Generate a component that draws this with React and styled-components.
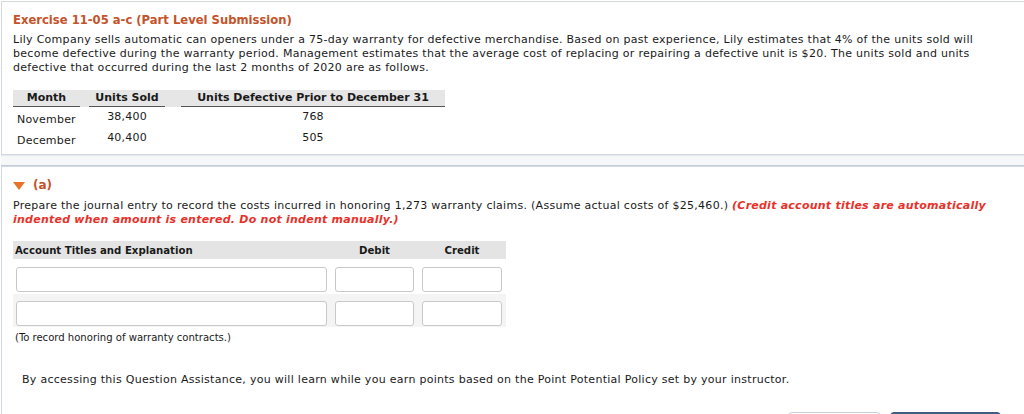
import React from 'react'
import styled, { createGlobalStyle } from 'styled-components'

const GlobalStyle = createGlobalStyle`
  html, body {
    margin: 0;
    padding: 0;
    background: #ffffff;
  }
  body {
    font-family: "DejaVu Sans", Verdana, sans-serif;
    color: #1a1a1a;
    overflow: hidden;
  }
`

const Page = styled.div`
  width: 1024px;
  height: 414px;
  overflow: hidden;
  padding-top: 1px;
  box-sizing: border-box;
`

const Panel = styled.section`
  border: 1px solid #d3d9e1;
  border-right: none;
  border-bottom: ${(p) => (p.$open ? 'none' : '1px solid #d3d9e1')};
  margin-left: 1px;
  padding: ${(p) => p.$pad};
  background: #ffffff;
`

const Gap = styled.div`
  height: 9px;
  background: #f6f7f9;
  border-top: 1px solid #e5e8ec;
  border-bottom: 1px solid #c5cddb;
  margin-left: 1px;
`

const Title = styled.h1`
  margin: 0 0 5px;
  font-size: 11.6px;
  font-weight: bold;
  color: #c4532b;
  line-height: 16px;
`

const Text = styled.p`
  margin: 0;
  font-size: 11px;
  line-height: 14px;
  letter-spacing: 0.28px;
`

const Red = styled.span`
  color: #e8312a;
  font-weight: bold;
  font-style: italic;
  letter-spacing: 0.24px;
`

const DataTable = styled.div`
  margin-top: 15px;
  width: 432px;
  font-size: 11px;
`

const HeadRow = styled.div`
  display: flex;
  background: #e6e6e6;
  height: 17px;
`

const Row = styled.div`
  display: flex;
  height: 21px;
`

const HeadCell = styled.div`
  width: ${(p) => p.$w}px;
  margin-left: ${(p) => p.$ml || 0}px;
  font-weight: bold;
  text-align: center;
  line-height: 16px;
  border-bottom: 1px solid #555555;
  box-sizing: border-box;
`

const Cell = styled.div`
  width: ${(p) => p.$w}px;
  margin-left: ${(p) => p.$ml || 0}px;
  line-height: ${(p) => (p.$num ? '20px' : '26px')};
  text-align: ${(p) => (p.$num ? 'center' : 'left')};
  padding-left: ${(p) => (p.$num ? '0' : '4px')};
  box-sizing: border-box;
  letter-spacing: 0.2px;
`

const Part = styled.div`
  display: flex;
  align-items: center;
  gap: 8px;
  font-size: 12px;
  font-weight: bold;
  color: #c4532b;
  height: 16px;
  margin-bottom: 6px;
`

const Caret = styled.svg`
  width: 12px;
  height: 8px;
  margin-top: 1px;
`

const Journal = styled.div`
  margin-top: 14px;
  width: 493px;
  font-family: "DejaVu Sans Condensed", Tahoma, sans-serif;
  font-size: 11.3px;
`

const JournalHead = styled.div`
  display: grid;
  grid-template-columns: 318px 87px 88px;
  background: #e4e4e4;
  height: 18px;
  line-height: 19px;
  font-weight: bold;
`

const JHCell = styled.div`
  text-align: ${(p) => p.$align || 'left'};
  padding-left: ${(p) => (p.$align ? '0' : '2px')};
`

const JournalRow = styled.div`
  display: grid;
  grid-template-columns: 318px 87px 88px;
  background: ${(p) => (p.$alt ? '#f4f4f4' : '#ffffff')};
  padding: ${(p) => (p.$alt ? '7px 0 1px' : '8px 0 2px')};
`

const Field = styled.div`
  height: 25px;
  margin: 0 4px 0 ${(p) => (p.$wide ? '3px' : '4px')};
  border: 1px solid #c9c9c9;
  border-radius: 3px;
  background: #ffffff;
  box-sizing: border-box;
`

const Note = styled.p`
  margin: 4px 0 0 2px;
  font-family: "DejaVu Sans Condensed", Tahoma, sans-serif;
  font-size: 11.2px;
  line-height: 14px;
`

const Assist = styled.p`
  margin: 28px 0 0 9px;
  font-size: 11px;
  line-height: 14px;
  letter-spacing: 0.28px;
`

const Buttons = styled.div`
  display: flex;
  justify-content: flex-end;
  gap: 9px;
  margin-top: 25px;
  padding-right: 12px;
`

const Btn = styled.button`
  width: ${(p) => (p.$primary ? '111px' : '93px')};
  height: 30px;
  border-radius: 4px;
  border: 1px solid ${(p) => (p.$primary ? '#3c5a7c' : '#c7d0da')};
  background: ${(p) => (p.$primary ? '#445f80' : '#ffffff')};
`

const rows = [
  { month: 'November', sold: '38,400', defective: '768' },
  { month: 'December', sold: '40,400', defective: '505' },
]

export default function App() {
  return (
    <Page>
      <GlobalStyle />
      <Panel $pad="10px 11px 5px">
        <Title>Exercise 11-05 a-c (Part Level Submission)</Title>
        <Text>
          Lily Company sells automatic can openers under a 75-day warranty for defective merchandise. Based on past experience, Lily estimates that 4% of the units sold will become defective during the warranty period. Management estimates that the average cost of replacing or repairing a defective unit is $20. The units sold and units defective that occurred during the last 2 months of 2020 are as follows.
        </Text>
        <DataTable>
          <HeadRow>
            <HeadCell $w={67}>Month</HeadCell>
            <HeadCell $w={76} $ml={9}>Units Sold</HeadCell>
            <HeadCell $w={264} $ml={16}>Units Defective Prior to December 31</HeadCell>
          </HeadRow>
          {rows.map((r) => (
            <Row key={r.month}>
              <Cell $w={67}>{r.month}</Cell>
              <Cell $w={76} $ml={9} $num>{r.sold}</Cell>
              <Cell $w={264} $ml={16} $num>{r.defective}</Cell>
            </Row>
          ))}
        </DataTable>
      </Panel>
      <Gap />
      <Panel $open $pad="10px 11px 0">
        <Part>
          <Caret viewBox="0 0 12 8">
            <path d="M0 0 H12 L6 8 Z" fill="#e8732a" />
          </Caret>
          (a)
        </Part>
        <Text>
          Prepare the journal entry to record the costs incurred in honoring 1,273 warranty claims. (Assume actual costs of $25,460.) <Red>(Credit account titles are automatically indented when amount is entered. Do not indent manually.)</Red>
        </Text>
        <Journal>
          <JournalHead>
            <JHCell>Account Titles and Explanation</JHCell>
            <JHCell $align="center">Debit</JHCell>
            <JHCell $align="center">Credit</JHCell>
          </JournalHead>
          <JournalRow>
            <Field $wide />
            <Field />
            <Field />
          </JournalRow>
          <JournalRow $alt>
            <Field $wide />
            <Field />
            <Field />
          </JournalRow>
        </Journal>
        <Note>(To record honoring of warranty contracts.)</Note>
        <Assist>
          By accessing this Question Assistance, you will learn while you earn points based on the Point Potential Policy set by your instructor.
        </Assist>
        <Buttons>
          <Btn />
          <Btn $primary />
        </Buttons>
      </Panel>
    </Page>
  )
}
